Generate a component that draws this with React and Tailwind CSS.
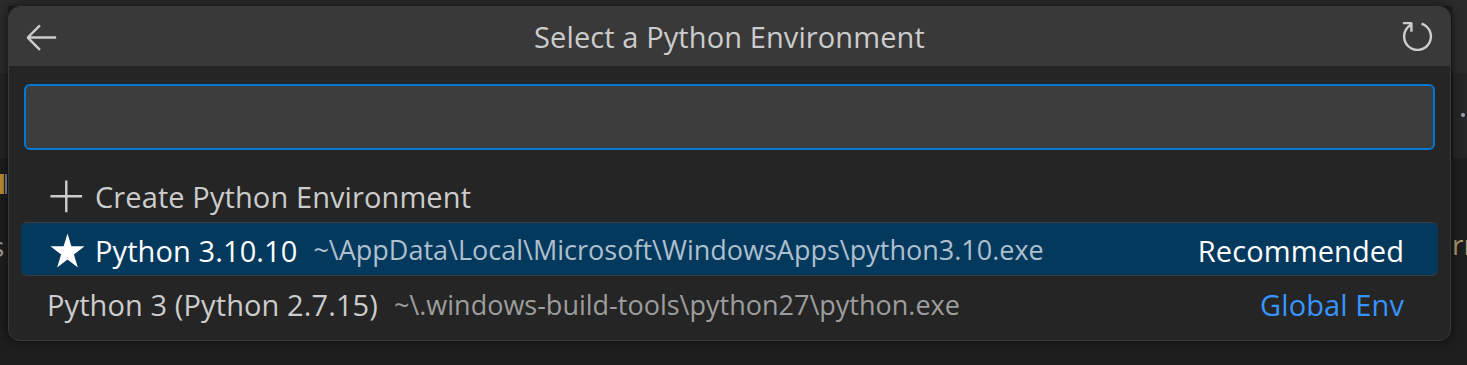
import React from "react";

const font = { fontFamily: '"Open Sans", "Noto Sans", sans-serif' };

function ArrowLeft({ className }) {
  return (
    <svg viewBox="0 0 16 16" className={className} fill="currentColor">
      <path d="M7 3.093l-5 5V8.8l5 5 .707-.707-4.14-4.146H14v-1H3.56L7.708 3.8 7 3.093z" />
    </svg>
  );
}

function Refresh({ className }) {
  return (
    <svg viewBox="0 0 16 16" className={className} fill="currentColor">
      <path d="M4.681 3H2V2h3.5l.5.5V6H5V4a5 5 0 1 0 4.53-.761l.302-.954A6 6 0 1 1 4.681 3z" />
    </svg>
  );
}

function Plus({ className }) {
  return (
    <svg viewBox="0 0 16 16" className={className} fill="currentColor">
      <path d="M14 7v1H8v6H7V8H1V7h6V1h1v6h6z" />
    </svg>
  );
}

function Star({ className }) {
  return (
    <svg viewBox="0 0 16 16" className={className} fill="currentColor">
      <path d="M9.595 6.252L8 1 6.405 6.252H1l4.373 3.4L3.75 15 8 11.695 12.25 15l-1.623-5.348L15 6.252H9.595z" />
    </svg>
  );
}

export default function App() {
  return (
    <div className="relative w-[1467px] h-[365px] overflow-hidden bg-[#1e1e1e]" style={font}>
      {/* editor fragments behind the dialog */}
      <div className="absolute left-0 top-0 w-full h-[6px] bg-[#2b2b2b]" />
      <div className="absolute left-0 top-[6px] w-[8px] h-[67px] bg-[#2b2b2b]" />
      <div className="absolute left-0 top-[73px] w-[8px] h-[85px] bg-[#252525]" />
      <div className="absolute left-0 top-[174px] w-[4px] h-[20px] bg-[#c08a2e]" />
      <div className="absolute left-[5px] top-[174px] w-[2px] h-[20px] bg-[#7a8aa0]" />
      <div className="absolute left-[-9px] top-[232px] text-[28px] leading-none text-[#9d9d9d]">s</div>
      <div className="absolute left-[1452px] top-[6px] w-[15px] h-[67px] bg-[#2b2b2b]" />
      <div className="absolute left-[1452px] top-[73px] w-[15px] h-[85px] bg-[#262626] border-l border-[#1a1a1a]" />
      <div className="absolute left-[1461px] top-[113px] w-[4px] h-[4px] rounded-full bg-[#9aa4b0]" />
      <div className="absolute left-[1452px] top-[230px] text-[28px] leading-none text-[#b39a72]">rr</div>

      {/* quick pick dialog */}
      <div className="absolute left-[8px] top-[6px] w-[1443px] h-[335px] rounded-[12px] bg-[#252525] border border-[#3a3a3a] shadow-[0_0_12px_rgba(0,0,0,0.6)] overflow-hidden flex flex-col">
        <div className="h-[59px] shrink-0 bg-[#393939] flex items-center justify-between pl-[13px] pr-[13px] text-[#cccccc]">
          <ArrowLeft className="w-[39px] h-[39px]" />
          <div className="text-[29px] tracking-[0.1px] text-[#cccccc]">Select a Python Environment</div>
          <Refresh className="w-[39px] h-[39px]" />
        </div>
        <div className="px-[15px] pt-[18px]">
          <div className="h-[66px] rounded-[6px] border-2 border-[#0078d4] bg-[#3c3c3c]" />
        </div>
        <div className="px-[12px] pt-[18px] flex flex-col">
          <div className="h-[54px] flex items-center pt-[4px] pl-[29px] pr-[34px] text-[#cccccc]">
            <Plus className="w-[39px] h-[39px] mr-[8px] -ml-[2px]" />
            <span className="text-[29px] tracking-[0.1px]">Create Python Environment</span>
          </div>
          <div className="h-[54px] flex items-center pt-[3px] pl-[29px] pr-[34px] rounded-[6px] bg-[#04395e] border-y border-[#3a3d41] text-white">
            <Star className="w-[39px] h-[39px] mr-[8px] -ml-[2px]" />
            <span className="text-[29px] tracking-[0.1px]">Python 3.10.10</span>
            <span className="ml-[16px] text-[27px] text-[#aebfcd]">~\AppData\Local\Microsoft\WindowsApps\python3.10.exe</span>
            <span className="ml-auto text-[29px] tracking-[0.1px]">Recommended</span>
          </div>
          <div className="h-[55px] flex items-center pt-[3px] pl-[26px] pr-[34px] text-[#cccccc]">
            <span className="text-[29px] tracking-[0.1px]">Python 3 (Python 2.7.15)</span>
            <span className="ml-[16px] text-[27px] text-[#9d9d9d]">~\.windows-build-tools\python27\python.exe</span>
            <span className="ml-auto text-[29px] tracking-[0.1px] text-[#3794ff]">Global Env</span>
          </div>
        </div>
      </div>
    </div>
  );
}
